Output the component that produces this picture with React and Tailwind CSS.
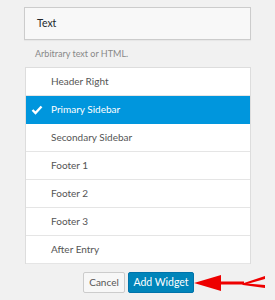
export default function App() {
  const areas = ['Header Right', 'Primary Sidebar', 'Secondary Sidebar', 'Footer 1', 'Footer 2', 'Footer 3', 'After Entry'];
  return (
    <div className="w-[275px] h-[300px] bg-[#f1f1f1] pt-[7px] pl-[24px] pr-[24px] text-[#444]" style={{ fontFamily: 'Lato, "Open Sans", sans-serif' }}>
      <div className="h-[33px] w-[227px] border border-[#ccc] bg-[#f8f8f8] flex items-center pl-[12px] text-[10.5px] text-[#23282d] shadow-[0_1px_1px_rgba(0,0,0,0.04)]">
        Text
      </div>
      <div className="h-[27px] flex items-center pl-[11px] text-[9px] text-[#888]">Arbitrary text or HTML.</div>
      <div className="w-[226px] ml-[1px] bg-white border border-[#ddd] border-b-0">
        {areas.map((a, i) => (
          <div
            key={a}
            className={`h-[28px] flex items-center text-[10px] border-b ${i === 1 ? 'bg-[#0096dd] text-white border-[#0096dd]' : 'border-[#e5e5e5] text-[#555]'}`}
          >
            <span className="w-[25px] flex justify-end pr-[8px]">
              {i === 1 && (
                <svg width="12" height="10" viewBox="0 0 12 10">
                  <path d="M1.5 5 L4.5 8 L10.5 1.5" fill="none" stroke="white" strokeWidth="2.4" />
                </svg>
              )}
            </span>
            {a}
          </div>
        ))}
      </div>
      <div className="flex items-center mt-[8px] ml-[59px]">
        <button className="shrink-0 h-[21px] w-[42px] text-[10px] text-[#555] bg-[#f7f7f7] border border-[#ccc] rounded-[2px] flex items-center justify-center">Cancel</button>
        <button className="shrink-0 ml-[3px] h-[21px] w-[66px] whitespace-nowrap text-[10.5px] text-white bg-[#0085ba] border border-[#0073aa] rounded-[2px] flex items-center justify-center">Add Widget</button>
        <svg width="76" height="20" viewBox="0 0 76 20" className="shrink-0 -ml-[1px]">
          <polygon points="1,10 28,2 28,18" fill="#e00" />
          <rect x="27" y="8.5" width="24" height="3" fill="#e00" />
          <polygon points="48,11 72,3 72,6 54,11" fill="#e00" />
          <polygon points="48,10 72,12 72,15 50,12" fill="#e00" />
        </svg>
      </div>
    </div>
  );
}
